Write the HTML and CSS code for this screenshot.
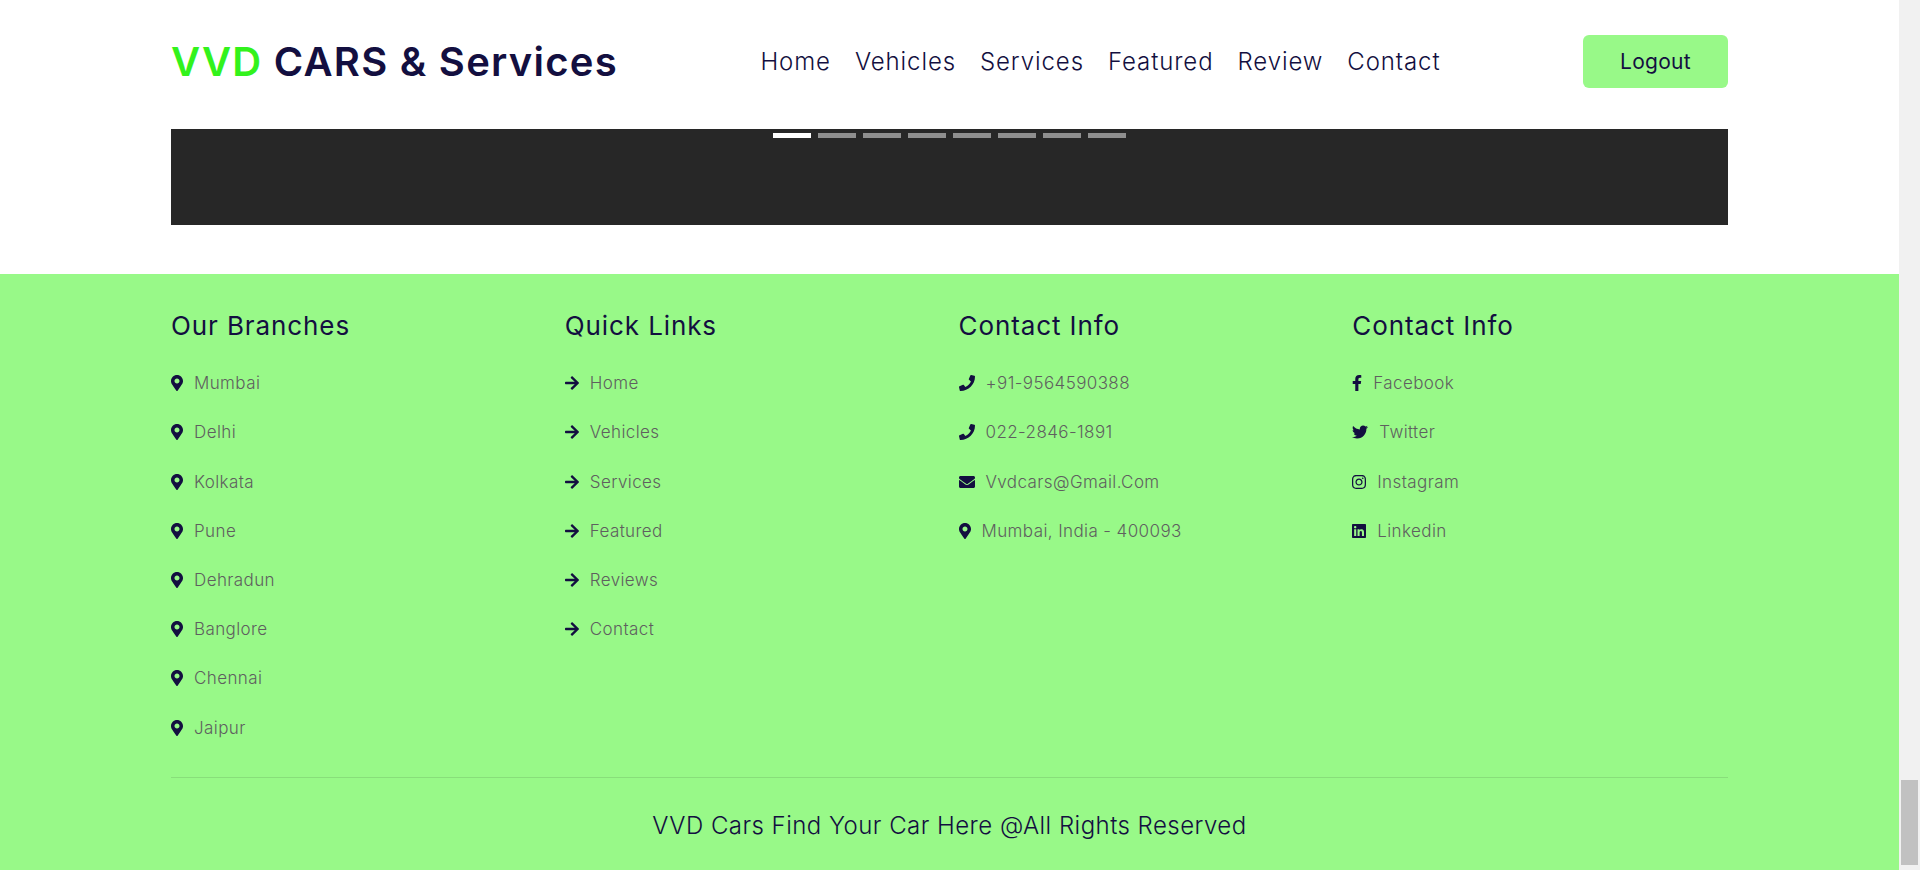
FILE: index.html
```html
<!DOCTYPE html>
<html lang="en">
<head>
    <meta charset="UTF-8">
    <title>VVD CARS &amp; Services</title>
    <link rel="stylesheet" href="styles.css">
</head>
<body>
    <svg class="icon-defs" aria-hidden="true">
        <symbol id="i-marker" viewBox="0 0 384 512"><path d="M172.268 501.67C26.97 291.031 0 269.413 0 192 0 85.961 85.961 0 192 0s192 85.961 192 192c0 77.413-26.97 99.031-172.268 309.67-9.535 13.774-29.93 13.773-39.464 0zM192 272c44.183 0 80-35.817 80-80s-35.817-80-80-80-80 35.817-80 80 35.817 80 80 80z"/></symbol>
        <symbol id="i-arrow" viewBox="0 0 448 512"><path d="M190.5 66.9l22.2-22.2c9.4-9.4 24.6-9.4 33.9 0L441 239c9.4 9.4 9.4 24.6 0 33.9L246.6 467.3c-9.4 9.4-24.6 9.4-33.9 0l-22.2-22.2c-9.5-9.5-9.3-25 .4-34.3L311.4 296H24c-13.3 0-24-10.7-24-24v-32c0-13.3 10.7-24 24-24h287.4L190.9 101.2c-9.8-9.3-10-24.8-.4-34.3z"/></symbol>
        <symbol id="i-phone" viewBox="0 0 512 512"><path d="M493.4 24.6l-104-24c-11.3-2.6-22.9 3.3-27.5 13.9l-48 112c-4.2 9.8-1.4 21.3 6.9 28l60.6 49.6c-36 76.7-98.9 140.5-177.2 177.2l-49.6-60.6c-6.8-8.3-18.2-11.1-28-6.9l-112 48C3.9 366.5-2 378.1.6 389.4l24 104C27.1 504.2 36.7 512 48 512c256.1 0 464-207.5 464-464 0-11.2-7.7-20.9-18.6-23.4z"/></symbol>
        <symbol id="i-envelope" viewBox="0 0 512 512"><path d="M502.3 190.8c3.9-3.1 9.7-.2 9.7 4.7V400c0 26.5-21.5 48-48 48H48c-26.5 0-48-21.5-48-48V195.6c0-5 5.7-7.8 9.7-4.7 22.4 17.4 52.1 39.5 154.1 113.6 21.1 15.4 56.7 47.8 92.2 47.6 35.7.3 72-32.8 92.3-47.6 102-74.1 131.6-96.3 154-113.7zM256 320c23.2.4 56.6-29.2 73.4-41.4 132.7-96.3 142.8-104.7 173.4-128.7 5.8-4.5 9.2-11.5 9.2-18.9v-19c0-26.5-21.5-48-48-48H48C21.5 64 0 85.5 0 112v19c0 7.4 3.4 14.3 9.2 18.9 30.6 23.9 40.7 32.4 173.4 128.7 16.8 12.2 50.2 41.8 73.4 41.4z"/></symbol>
        <symbol id="i-facebook" viewBox="0 0 320 512"><path d="M279.14 288l14.22-92.66h-88.91v-60.13c0-25.35 12.42-50.06 52.24-50.06h40.42V6.26S260.43 0 225.36 0c-73.22 0-121.08 44.38-121.08 124.72v70.62H22.89V288h81.39v224h100.17V288z"/></symbol>
        <symbol id="i-twitter" viewBox="0 0 512 512"><path d="M459.37 151.716c.325 4.548.325 9.097.325 13.645 0 138.72-105.583 298.558-298.558 298.558-59.452 0-114.68-17.219-161.137-47.106 8.447.974 16.568 1.299 25.34 1.299 49.055 0 94.213-16.568 130.274-44.832-46.132-.975-84.792-31.188-98.112-72.772 6.498.974 12.995 1.624 19.818 1.624 9.421 0 18.843-1.3 27.614-3.573-48.081-9.747-84.143-51.98-84.143-102.985v-1.299c13.969 7.797 30.214 12.67 47.431 13.319-28.264-18.843-46.781-51.005-46.781-87.391 0-19.492 5.197-37.36 14.294-52.954 51.655 63.675 129.3 105.258 216.365 109.807-1.624-7.797-2.599-15.918-2.599-24.04 0-57.828 46.782-104.934 104.934-104.934 30.213 0 57.502 12.67 76.67 33.137 23.715-4.548 46.456-13.32 66.599-25.34-7.798 24.366-24.366 44.833-46.132 57.827 21.117-2.273 41.584-8.122 60.426-16.243-14.292 20.791-32.161 39.308-52.628 54.253z"/></symbol>
        <symbol id="i-instagram" viewBox="0 0 448 512"><path d="M224.1 141c-63.6 0-114.9 51.3-114.9 114.9s51.3 114.9 114.9 114.9S339 319.5 339 255.9 287.7 141 224.1 141zm0 189.6c-41.1 0-74.7-33.5-74.7-74.7s33.5-74.7 74.7-74.7 74.7 33.5 74.7 74.7-33.6 74.7-74.7 74.7zm146.4-194.3c0 14.9-12 26.8-26.8 26.8-14.9 0-26.8-12-26.8-26.8s12-26.8 26.8-26.8 26.8 12 26.8 26.8zm76.1 27.2c-1.7-35.9-9.9-67.7-36.2-93.9-26.2-26.2-58-34.4-93.9-36.2-37-2.1-147.9-2.1-184.9 0-35.8 1.7-67.6 9.9-93.9 36.1s-34.4 58-36.2 93.9c-2.1 37-2.1 147.9 0 184.9 1.7 35.9 9.9 67.7 36.2 93.9s58 34.4 93.9 36.2c37 2.1 147.9 2.1 184.9 0 35.9-1.7 67.7-9.9 93.9-36.2 26.2-26.2 34.4-58 36.2-93.9 2.1-37 2.1-147.8 0-184.8zM398.8 388c-7.8 19.6-22.9 34.7-42.6 42.6-29.5 11.7-99.5 9-132.1 9s-102.7 2.6-132.1-9c-19.6-7.8-34.7-22.9-42.6-42.6-11.7-29.5-9-99.5-9-132.1s-2.6-102.7 9-132.1c7.8-19.6 22.9-34.7 42.6-42.6 29.5-11.7 99.5-9 132.1-9s102.7-2.6 132.1 9c19.6 7.8 34.7 22.9 42.6 42.6 11.7 29.5 9 99.5 9 132.1s2.7 102.7-9 132.1z"/></symbol>
        <symbol id="i-linkedin" viewBox="0 0 448 512"><path d="M416 32H31.9C14.3 32 0 46.5 0 64.3v383.4C0 465.5 14.3 480 31.9 480H416c17.6 0 32-14.5 32-32.3V64.3c0-17.8-14.4-32.3-32-32.3zM135.4 416H69V202.2h66.5V416zm-33.2-243c-21.3 0-38.5-17.3-38.5-38.5S80.9 96 102.2 96c21.2 0 38.5 17.3 38.5 38.5 0 21.3-17.2 38.5-38.5 38.5zm282.1 243h-66.4V312c0-24.8-.5-56.7-34.5-56.7-34.6 0-39.9 27-39.9 54.9V416h-66.4V202.2h63.7v29.2h.9c8.9-16.8 30.6-34.5 62.9-34.5 67.2 0 79.7 44.3 79.7 101.9V416z"/></symbol>
    </svg>

    <div class="page">
        <div class="content">
            <header class="header">
                <a href="#" class="logo"><span>VVD</span> CARS &amp; Services</a>
                <nav class="navbar">
                    <a href="#">Home</a>
                    <a href="#">Vehicles</a>
                    <a href="#">Services</a>
                    <a href="#">Featured</a>
                    <a href="#">Review</a>
                    <a href="#">Contact</a>
                </nav>
                <a href="#" class="logout-btn">Logout</a>
            </header>

            <section class="slider-section">
                <div class="slider">
                    <div class="slider-dots">
                        <span class="dot active"></span>
                        <span class="dot"></span>
                        <span class="dot"></span>
                        <span class="dot"></span>
                        <span class="dot"></span>
                        <span class="dot"></span>
                        <span class="dot"></span>
                        <span class="dot"></span>
                    </div>
                </div>
            </section>

            <footer class="footer">
                <div class="box-container">
                    <div class="box">
                        <h3>Our Branches</h3>
                        <a href="#"><svg class="icon w-marker"><use href="#i-marker"/></svg>Mumbai</a>
                        <a href="#"><svg class="icon w-marker"><use href="#i-marker"/></svg>Delhi</a>
                        <a href="#"><svg class="icon w-marker"><use href="#i-marker"/></svg>Kolkata</a>
                        <a href="#"><svg class="icon w-marker"><use href="#i-marker"/></svg>Pune</a>
                        <a href="#"><svg class="icon w-marker"><use href="#i-marker"/></svg>Dehradun</a>
                        <a href="#"><svg class="icon w-marker"><use href="#i-marker"/></svg>Banglore</a>
                        <a href="#"><svg class="icon w-marker"><use href="#i-marker"/></svg>Chennai</a>
                        <a href="#"><svg class="icon w-marker"><use href="#i-marker"/></svg>Jaipur</a>
                    </div>
                    <div class="box">
                        <h3>Quick Links</h3>
                        <a href="#"><svg class="icon w-14"><use href="#i-arrow"/></svg>Home</a>
                        <a href="#"><svg class="icon w-14"><use href="#i-arrow"/></svg>Vehicles</a>
                        <a href="#"><svg class="icon w-14"><use href="#i-arrow"/></svg>Services</a>
                        <a href="#"><svg class="icon w-14"><use href="#i-arrow"/></svg>Featured</a>
                        <a href="#"><svg class="icon w-14"><use href="#i-arrow"/></svg>Reviews</a>
                        <a href="#"><svg class="icon w-14"><use href="#i-arrow"/></svg>Contact</a>
                    </div>
                    <div class="box">
                        <h3>Contact Info</h3>
                        <a href="#"><svg class="icon w-16"><use href="#i-phone"/></svg>+91-9564590388</a>
                        <a href="#"><svg class="icon w-16"><use href="#i-phone"/></svg>022-2846-1891</a>
                        <a href="#"><svg class="icon w-16"><use href="#i-envelope"/></svg>Vvdcars@Gmail.Com</a>
                        <a href="#"><svg class="icon w-marker"><use href="#i-marker"/></svg>Mumbai, India - 400093</a>
                    </div>
                    <div class="box">
                        <h3>Contact Info</h3>
                        <a href="#"><svg class="icon w-10"><use href="#i-facebook"/></svg>Facebook</a>
                        <a href="#"><svg class="icon w-16"><use href="#i-twitter"/></svg>Twitter</a>
                        <a href="#"><svg class="icon w-14"><use href="#i-instagram"/></svg>Instagram</a>
                        <a href="#"><svg class="icon w-14"><use href="#i-linkedin"/></svg>Linkedin</a>
                    </div>
                </div>
                <div class="credit">VVD Cars Find Your Car Here @All Rights Reserved</div>
            </footer>
        </div>

        <div class="scrollbar"><span class="scrollbar-thumb"></span></div>
    </div>
</body>
</html>
```

FILE: styles.css
```css
* {
    box-sizing: border-box;
    margin: 0;
    padding: 0;
    text-decoration: none;
}
body {
    font-family: Inter, "Noto Sans", sans-serif;
    color: #130f40;
    background: #fff;
    height: 100vh;
    overflow: hidden;
}
a {
    color: inherit;
}
.icon-defs {
    display: none;
}
.page {
    display: flex;
    height: 870px;
}
.content {
    flex: 1;
    min-width: 0;
    display: flex;
    flex-direction: column;
}

/* header */
.header {
    display: flex;
    align-items: center;
    justify-content: space-between;
    height: 129px;
    padding: 0 171px 6px;
}
.logo {
    font-size: 40px;
    font-weight: 600;
    letter-spacing: 1.25px;
}
.logo span {
    color: #33f21c;
}
.navbar {
    display: flex;
    gap: 24px;
    font-size: 24px;
    font-weight: 300;
    letter-spacing: 0.9px;
}
.logout-btn {
    display: flex;
    align-items: center;
    justify-content: center;
    width: 145px;
    height: 53px;
    background: #98f988;
    border-radius: 6px;
    font-size: 21px;
    font-weight: 400;
    letter-spacing: 0.3px;
}

/* slider */
.slider-section {
    padding: 0 171px 49px;
}
.slider {
    height: 96px;
    background: #272727;
    padding-top: 4px;
}
.slider-dots {
    display: flex;
    justify-content: center;
    gap: 7px;
}
.dot {
    width: 38px;
    height: 5px;
    background: #8f8f8f;
}
.dot.active {
    background: #fff;
}

/* footer */
.footer {
    flex: 1;
    background: #98f988;
    padding: 32px 171px 0;
}
.box-container {
    display: grid;
    grid-template-columns: repeat(4, 1fr);
    gap: 18px;
    height: 472px;
    border-bottom: 1px solid rgba(0, 0, 0, 0.1);
}
.box h3 {
    font-size: 26px;
    font-weight: 400;
    letter-spacing: 0.9px;
    line-height: 40px;
    margin-bottom: 12.6px;
}
.box a {
    display: flex;
    align-items: center;
    gap: 11px;
    height: 49.2px;
    font-size: 17px;
    font-weight: 300;
    letter-spacing: 0.4px;
    color: #5f5f5f;
}
.icon {
    height: 16px;
    fill: #130f40;
    flex: none;
}
.w-marker {
    width: 12px;
}
.w-10 {
    width: 10px;
}
.w-14 {
    width: 14px;
}
.w-16 {
    width: 16px;
}
.credit {
    text-align: center;
    font-size: 24px;
    font-weight: 300;
    letter-spacing: 0.46px;
    padding-top: 33px;
}

/* scrollbar */
.scrollbar {
    width: 21px;
    background: #f1f1f1;
    display: flex;
    flex-direction: column;
    justify-content: flex-end;
    align-items: center;
    padding-bottom: 5px;
}
.scrollbar-thumb {
    width: 17px;
    height: 85px;
    background: #c1c1c1;
}
```
